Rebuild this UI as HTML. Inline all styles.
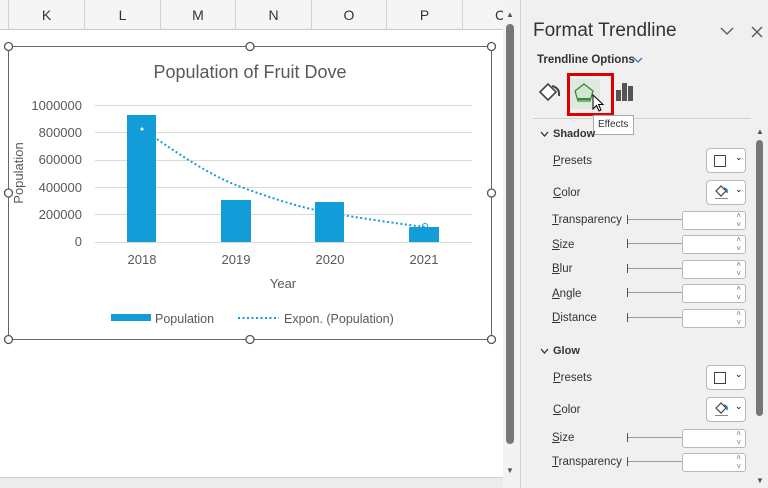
<!DOCTYPE html>
<html><head><style>
*{margin:0;padding:0;box-sizing:border-box}
body{width:768px;height:488px;overflow:hidden;background:#fff;font-family:"Liberation Sans",sans-serif;position:relative}
.a{position:absolute}
.hdr{top:0;left:0;width:503px;height:30px;background:#f5f5f5;border-bottom:1px solid #c8c8c8}
.col{top:0;height:30px;font-size:14px;color:#333;text-align:center;line-height:30px;border-left:1px solid #d4d4d4}
.lbl{font-size:11.5px;color:#333}
.lbl u{text-decoration:underline}
.sl{width:56px;height:1px;background:#999}
.sl:before{content:"";position:absolute;left:0;top:-4px;width:1px;height:9px;background:#555}
.spin{width:64px;height:19px;border:1px solid #b8b8b8;border-radius:3px;background:#fff}
.spin:after{content:"˄\A˅";white-space:pre;position:absolute;right:4px;top:-1px;font-size:8px;line-height:9px;color:#777}
.dd{width:40px;height:25px;border:1px solid #b8b8b8;border-radius:4px;background:#fff}
</style></head><body>
<div class="a hdr"></div>
<div class="a col" style="left:8px;width:76px">K</div>
<div class="a col" style="left:84px;width:76px">L</div>
<div class="a col" style="left:160px;width:75px">M</div>
<div class="a col" style="left:235px;width:76px">N</div>
<div class="a col" style="left:311px;width:75px">O</div>
<div class="a col" style="left:386px;width:76px">P</div>
<div class="a col" style="left:462px;width:41px;text-align:left;padding-left:32px">C</div>
<div class="a" style="left:503px;top:0;width:17px;height:488px;background:#f3f3f3"></div>
<div class="a" style="left:506px;top:24px;width:8px;height:420px;border-radius:4px;background:#777"></div>
<div class="a" style="left:506px;top:10px;font-size:8px;color:#555">▲</div>
<div class="a" style="left:506px;top:466px;font-size:8px;color:#555">▼</div>
<div class="a" style="left:0;top:477px;width:503px;height:11px;background:#ececec;border-top:1px solid #d0d0d0"></div>
<svg class="a" style="left:0;top:0" width="503" height="477">
<rect x="8.5" y="46.5" width="483" height="293" fill="#fff" stroke="#666"/>
<g fill="#fff" stroke="#555" stroke-width="1.3">
<circle cx="8.5" cy="46.5" r="4"/><circle cx="250" cy="46.5" r="4"/><circle cx="491.5" cy="46.5" r="4"/>
<circle cx="8.5" cy="193" r="4"/><circle cx="491.5" cy="193" r="4"/>
<circle cx="8.5" cy="339.5" r="4"/><circle cx="250" cy="339.5" r="4"/><circle cx="491.5" cy="339.5" r="4"/>
</g>
<text x="250" y="78" text-anchor="middle" font-size="18" fill="#595959" font-family="Liberation Sans">Population of Fruit Dove</text>
<g stroke="#d9d9d9"><line x1="95" y1="105.5" x2="472" y2="105.5"/><line x1="95" y1="132.5" x2="472" y2="132.5"/><line x1="95" y1="160.5" x2="472" y2="160.5"/><line x1="95" y1="187.5" x2="472" y2="187.5"/><line x1="95" y1="214.5" x2="472" y2="214.5"/><line x1="95" y1="242.5" x2="472" y2="242.5"/></g>
<g font-size="13" fill="#595959" text-anchor="end" font-family="Liberation Sans">
<text x="82" y="110">1000000</text><text x="82" y="137">800000</text><text x="82" y="164">600000</text><text x="82" y="192">400000</text><text x="82" y="219">200000</text><text x="82" y="246">0</text></g>
<g fill="#129cd8"><rect x="127" y="115" width="29" height="127"/><rect x="221" y="200" width="30" height="42"/><rect x="315" y="202" width="29" height="40"/><rect x="409" y="227" width="30" height="15"/></g>
<path d="M142 129 C180 155,210 175,236 185 S300 208,330 213 S400 224,425 227" fill="none" stroke="#129cd8" stroke-width="2" stroke-dasharray="2 2.5"/>
<circle cx="142" cy="129" r="1.5" fill="#fff"/><circle cx="425" cy="226" r="2.5" fill="none" stroke="#129cd8"/>
<g font-size="13" fill="#595959" text-anchor="middle" font-family="Liberation Sans">
<text x="142" y="264">2018</text><text x="236" y="264">2019</text><text x="330" y="264">2020</text><text x="424" y="264">2021</text>
<text x="283" y="288">Year</text>
<text transform="translate(23 173) rotate(-90)">Population</text></g>
<rect x="111" y="314" width="40" height="7" fill="#129cd8"/>
<text x="155" y="323" font-size="12.5" fill="#595959" font-family="Liberation Sans">Population</text>
<line x1="238" y1="318" x2="279" y2="318" stroke="#129cd8" stroke-width="2" stroke-dasharray="2 2.5"/>
<text x="284" y="323" font-size="12.5" fill="#595959" font-family="Liberation Sans">Expon. (Population)</text>
</svg>
<div class="a" style="left:520px;top:0;width:248px;height:488px;background:#f0f0f0;border-left:1px solid #d0d0d0"></div>
<div class="a" style="left:533px;top:20px;font-size:19px;color:#333">Format Trendline</div>
<svg class="a" style="left:720px;top:26px" width="14" height="10"><path d="M1 2 L7 8 L13 2" fill="none" stroke="#555" stroke-width="1.3"/></svg>
<svg class="a" style="left:751px;top:26px" width="12" height="12"><path d="M1 1 L11 11 M11 1 L1 11" stroke="#555" stroke-width="1.3"/></svg>
<div class="a" style="left:537px;top:54px;font-size:11.5px;font-weight:bold;color:#333">Trendline Options</div>
<svg class="a" style="left:633px;top:57px" width="10" height="7"><path d="M1 1 L5 5 L9 1" fill="none" stroke="#2a7ad0" stroke-width="1.3"/></svg>
<svg class="a" style="left:536px;top:78px" width="110" height="32">
<path d="M4 14 L12 6 L20 14 L12 22 Z" fill="#fff" stroke="#444" stroke-width="1.6"/>
<path d="M16 8 Q24 10 23 18" fill="none" stroke="#444" stroke-width="2"/>
<rect x="32" y="1" width="32" height="30" rx="3" fill="#dfe9df"/>
<path d="M48 6 L57 13 L54 23 L42 23 L39 13 Z" fill="#cfe7cf" stroke="#3a8a3a" stroke-width="1.3"/>
<line x1="42" y1="21" x2="54" y2="21" stroke="#3a8a3a" stroke-width="2"/>
<rect x="80" y="12" width="5" height="11" fill="#555"/><rect x="86" y="5" width="5" height="18" fill="#555"/><rect x="92" y="8" width="5" height="15" fill="#555"/>
</svg>
<div class="a" style="left:567px;top:73px;width:47px;height:43px;border:3px solid #e00000"></div>
<svg class="a" style="left:592px;top:94px" width="14" height="20"><path d="M1 1 L1 15 L4.5 11.5 L7 17 L9 16 L6.5 10.5 L11 10.5 Z" fill="#fff" stroke="#000"/></svg>
<div class="a" style="left:533px;top:118px;width:218px;height:1px;background:#d0d0d0"></div>
<div class="a" style="left:593px;top:115px;width:41px;height:20px;background:#fff;border:1px solid #aaa;font-size:10px;color:#333;line-height:18px;padding-left:4px">Effects</div>
<svg class="a" style="left:540px;top:131px" width="9" height="7"><path d="M1 1 L4.5 5 L8 1" fill="none" stroke="#333" stroke-width="1.3"/></svg>
<div class="a" style="left:553px;top:128px;font-size:11px;font-weight:bold;color:#333">Shadow</div>
<div class="a lbl" style="left:553px;top:155px"><u>P</u>resets</div>
<div class="a dd" style="left:706px;top:148px"></div><div class="a" style="left:714px;top:155px;width:12px;height:12px;border:1px solid #444"></div><div class="a" style="left:735px;top:152px;font-size:9px">⌄</div>
<div class="a lbl" style="left:553px;top:187px"><u>C</u>olor</div>
<div class="a dd" style="left:706px;top:180px"></div>
<svg class="a" style="left:713px;top:184px" width="18" height="16"><path d="M3 7 L8 2 L13 7 L8 12 Z" fill="#fff" stroke="#444" stroke-width="1.2"/><path d="M11 4 Q15 5 14 9" fill="none" stroke="#2a7ad0" stroke-width="1.5"/><line x1="2" y1="14.5" x2="15" y2="14.5" stroke="#888"/></svg>
<div class="a" style="left:735px;top:184px;font-size:9px">⌄</div>
<div class="a lbl" style="left:552px;top:214px"><u>T</u>ransparency</div><div class="a sl" style="left:627px;top:219px"></div><div class="a spin" style="left:682px;top:211px"></div>
<div class="a lbl" style="left:552px;top:239px"><u>S</u>ize</div><div class="a sl" style="left:627px;top:243px"></div><div class="a spin" style="left:682px;top:235px"></div>
<div class="a lbl" style="left:552px;top:263px"><u>B</u>lur</div><div class="a sl" style="left:627px;top:268px"></div><div class="a spin" style="left:682px;top:260px"></div>
<div class="a lbl" style="left:552px;top:288px"><u>A</u>ngle</div><div class="a sl" style="left:627px;top:292px"></div><div class="a spin" style="left:682px;top:284px"></div>
<div class="a lbl" style="left:552px;top:312px"><u>D</u>istance</div><div class="a sl" style="left:627px;top:317px"></div><div class="a spin" style="left:682px;top:309px"></div>
<svg class="a" style="left:540px;top:348px" width="9" height="7"><path d="M1 1 L4.5 5 L8 1" fill="none" stroke="#333" stroke-width="1.3"/></svg>
<div class="a" style="left:553px;top:345px;font-size:11px;font-weight:bold;color:#333">Glow</div>
<div class="a lbl" style="left:553px;top:372px"><u>P</u>resets</div>
<div class="a dd" style="left:706px;top:365px"></div><div class="a" style="left:714px;top:372px;width:12px;height:12px;border:1px solid #444"></div><div class="a" style="left:735px;top:369px;font-size:9px">⌄</div>
<div class="a lbl" style="left:553px;top:404px"><u>C</u>olor</div>
<div class="a dd" style="left:706px;top:397px"></div>
<svg class="a" style="left:713px;top:401px" width="18" height="16"><path d="M3 7 L8 2 L13 7 L8 12 Z" fill="#fff" stroke="#444" stroke-width="1.2"/><path d="M11 4 Q15 5 14 9" fill="none" stroke="#2a7ad0" stroke-width="1.5"/><line x1="2" y1="14.5" x2="15" y2="14.5" stroke="#888"/></svg>
<div class="a" style="left:735px;top:401px;font-size:9px">⌄</div>
<div class="a lbl" style="left:552px;top:432px"><u>S</u>ize</div><div class="a sl" style="left:627px;top:437px"></div><div class="a spin" style="left:682px;top:429px"></div>
<div class="a lbl" style="left:552px;top:456px"><u>T</u>ransparency</div><div class="a sl" style="left:627px;top:461px"></div><div class="a spin" style="left:682px;top:453px"></div>
<div class="a" style="left:756px;top:127px;font-size:8px;color:#555">▲</div>
<div class="a" style="left:756px;top:140px;width:7px;height:276px;border-radius:4px;background:#777"></div>
<div class="a" style="left:756px;top:476px;font-size:8px;color:#555">▼</div>
</body></html>
